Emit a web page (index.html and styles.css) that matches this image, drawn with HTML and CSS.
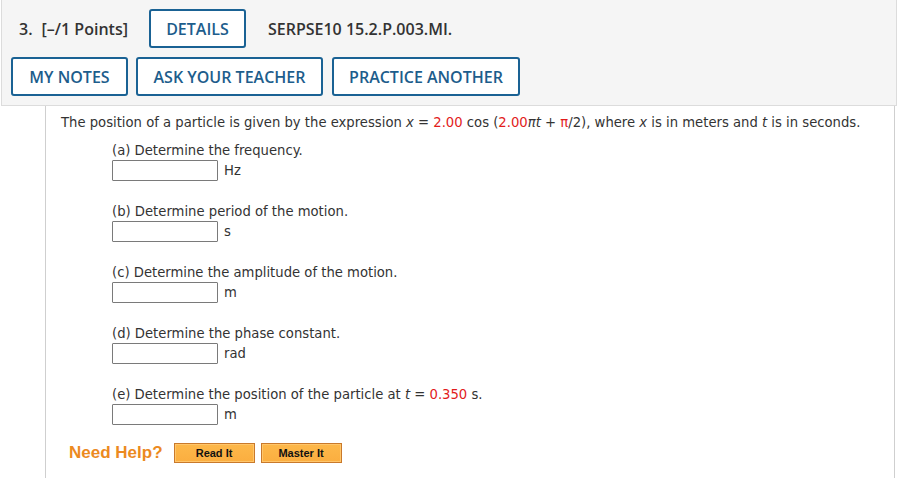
FILE: index.html
```html
<!DOCTYPE html>
<html>
<head>
<meta charset="utf-8">
<link rel="stylesheet" href="styles.css">
</head>
<body>
<div class="page">
  <div class="header">
    <div class="row1">
      <span class="qnum">3.</span>
      <span class="points">[–/1 Points]</span>
      <button class="btn details">DETAILS</button>
      <span class="code">SERPSE10 15.2.P.003.MI.</span>
    </div>
    <div class="row2">
      <button class="btn notes">MY NOTES</button>
      <button class="btn ask">ASK YOUR TEACHER</button>
      <button class="btn practice">PRACTICE ANOTHER</button>
    </div>
  </div>
  <div class="content">
    <p class="intro">The position of a particle is given by the expression <i>x</i> = <span class="red">2.00</span> cos (<span class="red">2.00</span><i>πt</i> + <span class="red">π</span>/2), where <i>x</i> is in meters and <i>t</i> is in seconds.</p>
    <div class="part">
      <div class="q">(a) Determine the frequency.</div>
      <div class="ans"><span class="box"></span><span class="unit">Hz</span></div>
    </div>
    <div class="part">
      <div class="q">(b) Determine period of the motion.</div>
      <div class="ans"><span class="box"></span><span class="unit">s</span></div>
    </div>
    <div class="part">
      <div class="q">(c) Determine the amplitude of the motion.</div>
      <div class="ans"><span class="box"></span><span class="unit">m</span></div>
    </div>
    <div class="part">
      <div class="q">(d) Determine the phase constant.</div>
      <div class="ans"><span class="box"></span><span class="unit">rad</span></div>
    </div>
    <div class="part">
      <div class="q">(e) Determine the position of the particle at <i>t</i> = <span class="red">0.350</span> s.</div>
      <div class="ans"><span class="box"></span><span class="unit">m</span></div>
    </div>
    <div class="help">
      <span class="need">Need Help?</span>
      <span class="hbtn">Read It</span>
      <span class="hbtn">Master It</span>
    </div>
  </div>
</div>
</body>
</html>
```

FILE: styles.css
```css
html, body {
  margin: 0;
  padding: 0;
  background: #fff;
}
.page {
  width: 897px;
  height: 478px;
  overflow: hidden;
}
.header {
  background: #f5f5f5;
  border: 1px solid #dcdcdc;
  border-top: none;
  margin-left: 1px;
  height: 106px;
  box-sizing: border-box;
  padding: 9px 0 0 9px;
  font-family: "Open Sans", sans-serif;
}
.row1 {
  display: flex;
  align-items: center;
  height: 39px;
  color: #333;
  font-weight: 600;
  font-size: 16px;
}
.qnum { margin-left: 8px; }
.points { margin-left: 9px; }
.row2 {
  display: flex;
  gap: 8px;
  margin-top: 9px;
}
.btn {
  height: 39px;
  box-sizing: border-box;
  border: 2px solid #1a6294;
  border-radius: 3px;
  background: #fff;
  color: #1d5d8c;
  font-family: "Open Sans", sans-serif;
  font-weight: 600;
  font-size: 16px;
  padding: 0;
  margin: 0;
  text-align: center;
}
.row1 .details { margin-left: 21px; width: 97px; }
.code { margin-left: 22px; }
.notes { width: 117px; }
.ask { width: 187px; }
.practice { width: 188px; margin-left: 1px; }
.content {
  margin-left: 45px;
  width: 850px;
  border-left: 1px solid #cfcfcf;
  border-right: 1px solid #cfcfcf;
  height: 372px;
  box-sizing: border-box;
  padding: 8px 0 0 15px;
  font-family: "DejaVu Sans", Verdana, sans-serif;
  font-size: 13.2px;
  color: #333;
}
.intro {
  margin: 0;
  line-height: 17px;
}
.red { color: #e21b1b; }
.part {
  margin-left: 51px;
  margin-top: 10px;
  height: 51px;
}
.part:nth-of-type(1) { margin-top: 11px; }
.q { line-height: 17px; }
.ans {
  display: flex;
  align-items: center;
  margin-top: 1px;
}
.box {
  width: 106px;
  height: 21px;
  box-sizing: border-box;
  border: 1px solid #7a7a7a;
  border-radius: 1px;
  background: #fff;
}
.unit { margin-left: 6px; }
.help {
  display: flex;
  align-items: center;
  margin-left: 8px;
  margin-top: 6px;
}
.need {
  font-family: "Liberation Sans", Arial, sans-serif;
  font-weight: bold;
  font-size: 17px;
  color: #ec8a1f;
  margin-right: 11px;
}
.hbtn {
  width: 81px;
  height: 20px;
  box-sizing: border-box;
  border: 1px solid #c9792b;
  background: linear-gradient(#fdb84a, #fbae40);
  box-shadow: inset 0 0 0 1px #ffc66b;
  font-family: "Liberation Sans", Arial, sans-serif;
  font-weight: bold;
  font-size: 11px;
  color: #111;
  display: flex;
  align-items: center;
  justify-content: center;
  margin-right: 6px;
}
```
